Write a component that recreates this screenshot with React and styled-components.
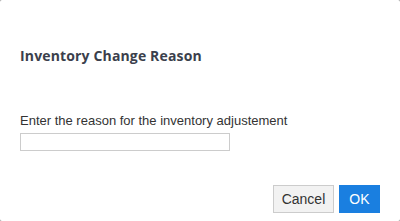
import styled, { createGlobalStyle } from 'styled-components';

const Global = createGlobalStyle`
  html, body { margin: 0; padding: 0; background: #9a9a9a; }
  #root { width: 400px; height: 221px; }
`;

const Dialog = styled.div`
  width: 400px;
  height: 221px;
  box-sizing: border-box;
  background: #fff;
  border-radius: 2px;
  display: flex;
  flex-direction: column;
  padding: 46px 20px 8px 20px;
`;

const Title = styled.h2`
  margin: 0;
  font-family: "Open Sans", sans-serif;
  font-weight: 700;
  font-size: 14px;
  line-height: 20px;
  letter-spacing: 0.15px;
  color: #3b3f4c;
`;

const Body = styled.div`
  margin-top: 47px;
  display: flex;
  flex-direction: column;
  gap: 4px;
  flex: 1;
`;

const Label = styled.label`
  font-family: "Liberation Sans", Arial, sans-serif;
  font-size: 13px;
  line-height: 16px;
  color: #333;
`;

const Input = styled.input`
  display: block;
  width: 210px;
  height: 18px;
  box-sizing: border-box;
  border: 1px solid #ccc;
  border-radius: 0;
  margin: 0;
  padding: 0 4px;
  outline: none;
`;

const Footer = styled.div`
  display: flex;
  justify-content: flex-end;
  gap: 5px;
`;

const Button = styled.button`
  height: 28px;
  box-sizing: border-box;
  padding: 0 ${p => (p.$primary ? '9.5px' : '7.5px')};
  border: 1px solid ${p => (p.$primary ? '#1a7fe0' : '#ccc')};
  background: ${p => (p.$primary ? '#1a7fe0' : '#f2f2f2')};
  color: ${p => (p.$primary ? '#fff' : '#333')};
  font-family: "Liberation Sans", Arial, sans-serif;
  font-size: 14px;
  border-radius: 0;
  cursor: pointer;
`;

export default function App() {
  return (
    <>
      <Global />
      <Dialog>
        <Title>Inventory Change Reason</Title>
        <Body>
          <Label>Enter the reason for the inventory adjustement</Label>
          <Input type="text" />
        </Body>
        <Footer>
          <Button>Cancel</Button>
          <Button $primary>OK</Button>
        </Footer>
      </Dialog>
    </>
  );
}
